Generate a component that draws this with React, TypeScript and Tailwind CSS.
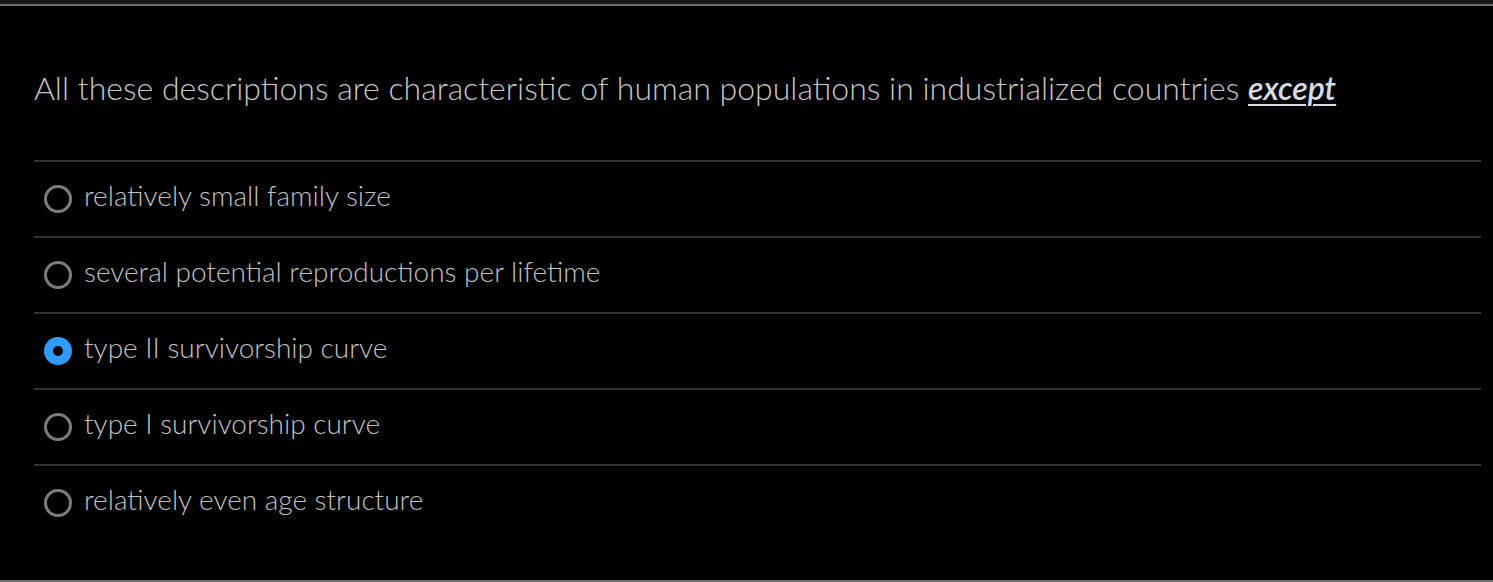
const options = [
  { label: "relatively small family size", checked: false },
  { label: "several potential reproductions per lifetime", checked: false },
  { label: "type II survivorship curve", checked: true },
  { label: "type I survivorship curve", checked: false },
  { label: "relatively even age structure", checked: false },
];

function Radio({ checked }: { checked: boolean }) {
  if (checked) {
    return (
      <span className="flex h-[28px] w-[28px] shrink-0 items-center justify-center rounded-full bg-[#2f9bf4]">
        <span className="h-[10px] w-[10px] rounded-full bg-black" />
      </span>
    );
  }
  return <span className="h-[28px] w-[28px] shrink-0 rounded-full border-[3px] border-[#7c7c7c]" />;
}

export default function App() {
  return (
    <div className="flex h-[582px] w-full flex-col bg-black font-['Lato','Liberation_Sans',sans-serif]">
      <div className="h-[4px] bg-[#1a1a1a]" />
      <div className="h-[2px] bg-[#6e6e6e]" />
      <main className="flex-1 pl-[34px] pr-[12px]">
        <h1 className="pt-[62px] pb-[52px] text-[32px] font-light leading-[40px] text-[#c6c6c6]">
          All these descriptions are characteristic of human populations in industrialized countries{" "}
          <em className="font-semibold italic text-[#d4dbe2] underline decoration-[2px] underline-offset-[4px]">except</em>
        </h1>
        <ul>
          {options.map((o) => (
            <li key={o.label} className="flex h-[76px] items-center gap-[12px] border-t-2 border-[#333333] pl-[10px]">
              <Radio checked={o.checked} />
              <span className="-mt-[8px] text-[28px] font-light text-[#c2c2c2]">{o.label}</span>
            </li>
          ))}
        </ul>
      </main>
      <div className="h-[2px] bg-[#6e6e6e]" />
    </div>
  );
}
